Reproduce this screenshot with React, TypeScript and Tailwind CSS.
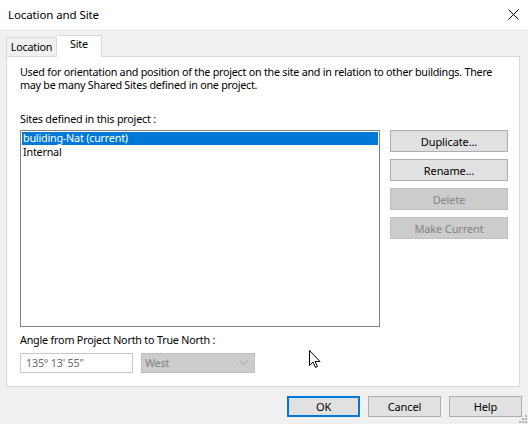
import React from "react";

const font = { fontFamily: '"Noto Sans", "Liberation Sans", sans-serif' };

function Btn({ label, disabled, w, h, focus }: { label: string; disabled?: boolean; w: string; h: string; focus?: boolean }) {
  return (
    <div
      className={`${w} ${h} flex items-center justify-center text-[11px] tracking-[-0.12px] leading-none ${
        disabled
          ? "bg-[#cccccc] border border-[#bfbfbf] text-[#838383]"
          : focus
          ? "bg-[#e1e1e1] border-2 border-[#0078d7] text-black"
          : "bg-[#e1e1e1] border border-[#adadad] text-black"
      }`}
    >
      {label}
    </div>
  );
}

export default function App() {
  return (
    <div className="w-[528px] h-[424px] bg-[#f0f0f0] flex flex-col relative overflow-hidden text-black text-[10.75px] tracking-[-0.2px]" style={font}>
      {/* title bar */}
      <div className="h-[29px] bg-white flex items-center justify-between pl-[8px] pr-[9px] shrink-0">
        <span className="text-[11.5px] tracking-[-0.1px]">Location and Site</span>
        <svg width="11" height="11" viewBox="0 0 11 11">
          <path d="M0.5 0.5 L10.5 10.5 M10.5 0.5 L0.5 10.5" stroke="#000" strokeWidth="1" />
        </svg>
      </div>

      {/* tabs */}
      <div className="flex pl-[6px] mt-[6px] h-[21px] items-end">
        <div className="w-[51px] h-[19px] border border-b-0 border-[#d9d9d9] bg-[#f0f0f0] flex items-center justify-center leading-none">
          Location
        </div>
        <div className="w-[45px] h-[22px] border border-b-0 border-l-0 border-[#d9d9d9] bg-white flex items-start justify-center pt-[3px] leading-none relative z-10 mb-[-1px]">
          Site
        </div>
      </div>

      {/* panel */}
      <div className="ml-[6px] w-[514px] h-[331px] bg-white border border-[#d9d9d9] flex flex-col pl-[13px] pt-[9px]">
        <p className="leading-[13px] whitespace-nowrap tracking-[-0.25px]">
          Used for orientation and position of the project on the site and in relation to other buildings. There
          <br />
          may be many Shared Sites defined in one project.
        </p>
        <p className="leading-[13px] mt-[21px]">Sites defined in this project :</p>
        <div className="flex mt-[4px]">
          <div className="w-[360px] h-[197px] border border-[#828282] p-[1px] flex flex-col">
            <div className="h-[13px] bg-[#0078d7] text-white leading-[13px] pl-[1px]">buliding-Nat (current)</div>
            <div className="h-[13px] leading-[13px] pl-[1px] mt-[1px]">Internal</div>
          </div>
          <div className="ml-[10px] flex flex-col gap-[7px]">
            <Btn label="Duplicate..." w="w-[118px]" h="h-[22px]" />
            <Btn label="Rename..." w="w-[118px]" h="h-[22px]" />
            <Btn label="Delete" w="w-[118px]" h="h-[22px]" disabled />
            <Btn label="Make Current" w="w-[118px]" h="h-[22px]" disabled />
          </div>
        </div>
        <p className="leading-[13px] mt-[7px]">Angle from Project North to True North :</p>
        <div className="flex mt-[6px] gap-[8px]">
          <div className="w-[113px] h-[20px] border border-[#c8c8c8] flex items-center pl-[5px] text-[#6d6d6d] leading-none">
            135° 13' 55"
          </div>
          <div className="w-[114px] h-[20px] border border-[#bfbfbf] bg-[#cccccc] flex items-center justify-between pl-[3px] pr-[6px] text-[#838383] leading-none">
            <span>West</span>
            <svg width="9" height="6" viewBox="0 0 9 6">
              <path d="M0.5 0.5 L4.5 4.5 L8.5 0.5" stroke="#a0a0a0" fill="none" strokeWidth="1" />
            </svg>
          </div>
        </div>
      </div>

      {/* bottom buttons */}
      <div className="flex gap-[8px] pl-[287px] mt-[9px]">
        <Btn label="OK" w="w-[73px]" h="h-[21px]" focus />
        <Btn label="Cancel" w="w-[73px]" h="h-[21px]" />
        <Btn label="Help" w="w-[73px]" h="h-[21px]" />
      </div>

      {/* resize grip */}
      <svg className="absolute right-[1px] bottom-[1px]" width="9" height="9" viewBox="0 0 9 9">
        <rect x="7" y="1" width="2" height="2" fill="#b0b0b0" />
        <rect x="4" y="4" width="2" height="2" fill="#b0b0b0" />
        <rect x="7" y="4" width="2" height="2" fill="#b0b0b0" />
        <rect x="1" y="7" width="2" height="2" fill="#b0b0b0" />
        <rect x="4" y="7" width="2" height="2" fill="#b0b0b0" />
        <rect x="7" y="7" width="2" height="2" fill="#b0b0b0" />
      </svg>

      {/* mouse cursor */}
      <svg className="absolute left-[309px] top-[350px]" width="13" height="19" viewBox="0 0 13 19">
        <path
          d="M0.5 0.5 L0.5 15.5 L4 12 L6.5 17.5 L8.5 16.5 L6 11.5 L11 11.5 Z"
          fill="#fff"
          stroke="#000"
          strokeWidth="1"
          strokeLinejoin="miter"
        />
      </svg>
    </div>
  );
}
